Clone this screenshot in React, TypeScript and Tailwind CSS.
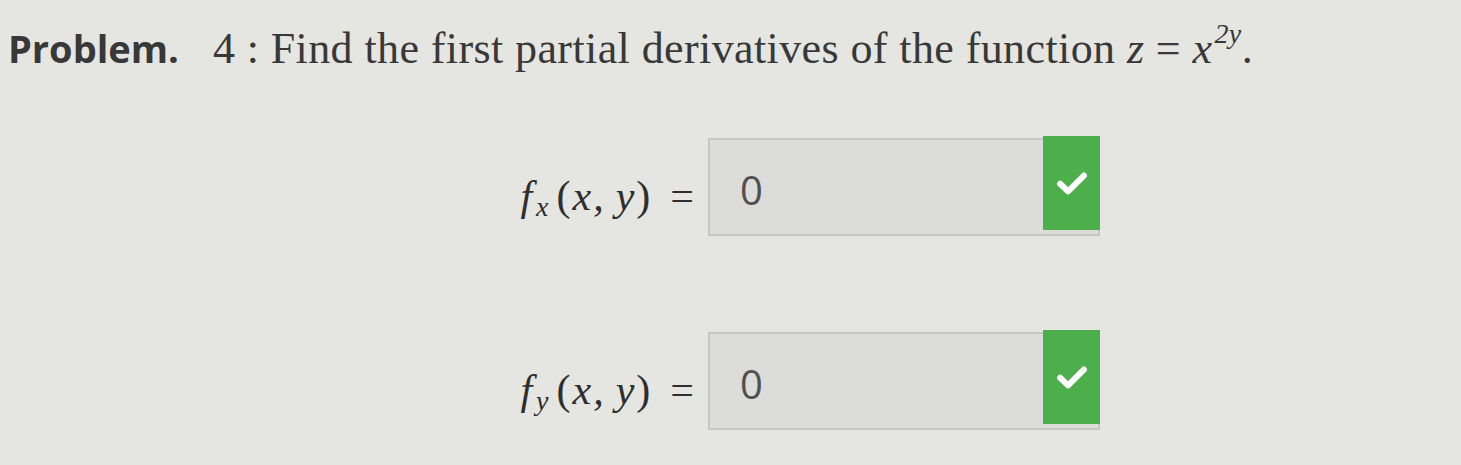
import React from 'react'

const serif = { fontFamily: '"Liberation Serif", "Times New Roman", serif' }
const sans = { fontFamily: '"Open Sans", "Liberation Sans", sans-serif' }

function Check() {
  return (
    <svg viewBox="0 0 24 24" className="w-[38px] h-[38px]" fill="none">
      <path d="M4.5 12.5l5 4.8 10-10" stroke="#ffffff" strokeWidth="3.8" strokeLinecap="round" strokeLinejoin="round" />
    </svg>
  )
}

function AnswerRow({ sub }: { sub: string }) {
  return (
    <div className="flex items-center">
      <div className="w-[708px] flex justify-end pr-[12px] pt-[18px] text-[42px] text-[#2e2e2e] italic" style={serif}>
        <span className="tracking-[2px]">
          f<sub className="text-[28px] align-[-6px] bottom-0 ml-[2px]">{sub}</sub>
          <span className="not-italic ml-[6px]">(</span>x,<span className="ml-[10px]">y</span>
          <span className="not-italic">)</span>
          <span className="not-italic ml-[18px]">=</span>
        </span>
      </div>
      <div className="flex w-[392px] h-[98px] border-2 border-[#c6c6c4] bg-[#dcdcda]">
        <div className="flex-1 flex items-center pl-[30px] pt-[6px] text-[40px] text-[#505050]" style={sans}>
          0
        </div>
        <div className="w-[57px] -mt-[4px] mb-[4px] -mr-[2px] bg-[#4caf4c] flex items-center justify-center">
          <Check />
        </div>
      </div>
    </div>
  )
}

export default function App() {
  return (
    <div className="w-[1461px] h-[465px] bg-[#e5e5e1] overflow-hidden">
      <div className="flex items-baseline pl-[8px] pt-[16px] text-[#383838]">
        <span className="text-[38px] font-bold" style={sans}>
          Problem.
        </span>
        <span className="ml-[34px] text-[44px] tracking-[0.4px]" style={serif}>
          4 : Find the first partial derivatives of the function <i>z</i> = <i>x</i>
          <sup className="text-[28px] italic align-[20px] top-0 ml-[2px]">2y</sup>.
        </span>
      </div>
      <div className="mt-[56px] flex flex-col gap-[96px]">
        <AnswerRow sub="x" />
        <AnswerRow sub="y" />
      </div>
    </div>
  )
}
